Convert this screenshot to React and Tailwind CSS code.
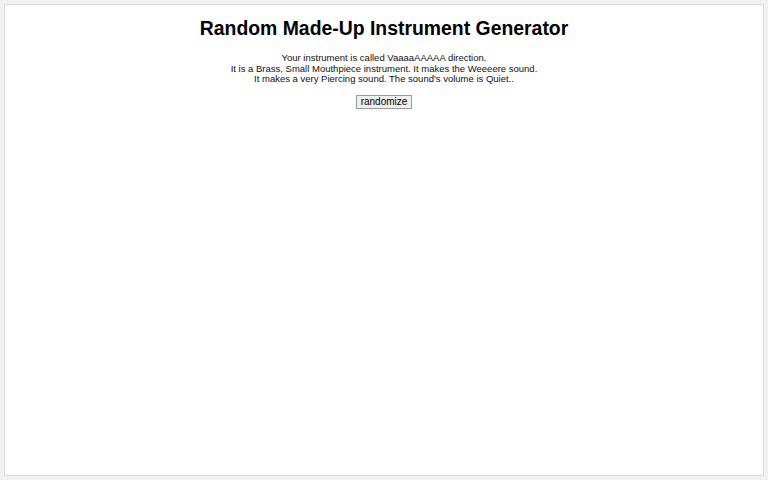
export default function App() {
  return (
    <div className="h-[480px] w-[768px] bg-[#f2f2f2] p-[4px] font-['Liberation_Sans',Arial,sans-serif] text-black">
      <div className="flex h-full flex-col items-center border border-[#dcdcdc] bg-white">
        <h1 className="mt-[10px] text-[19.4px] font-bold leading-[26px]">Random Made-Up Instrument Generator</h1>
        <div className="mt-[12px] text-center text-[9.5px] leading-[10.5px] text-[#111]">
          <p>Your instrument is called VaaaaAAAAA direction.</p>
          <p>It is a Brass, Small Mouthpiece instrument. It makes the Weeeere sound.</p>
          <p>It makes a very Piercing sound. The sound's volume is Quiet..</p>
        </div>
        <button className="mt-[10px] h-[14px] border border-[#9a9a9a] bg-[#efefef] px-[4px] text-[10px] leading-[12px] text-black">
          randomize
        </button>
      </div>
    </div>
  );
}
